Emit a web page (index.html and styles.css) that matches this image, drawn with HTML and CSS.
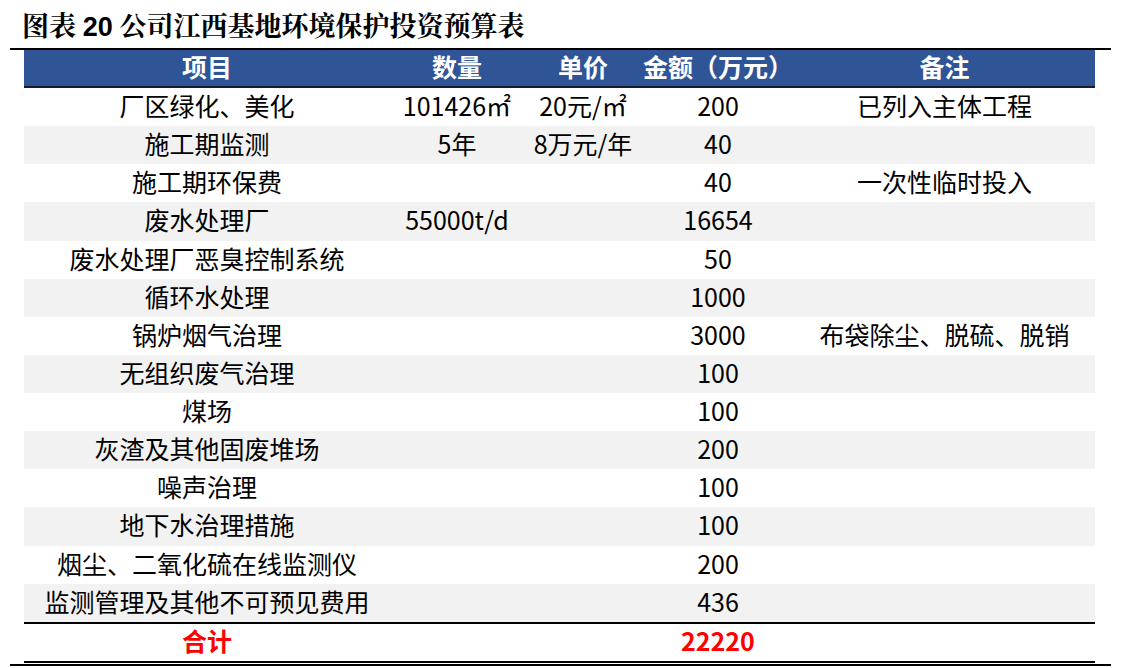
FILE: index.html
```html
<!DOCTYPE html>
<html lang="zh-CN">
<head>
<meta charset="utf-8">
<title>图表 20 公司江西基地环境保护投资预算表</title>
<link rel="stylesheet" href="styles.css">
</head>
<body>
<div class="page">
  <h1 class="title">图表 <span class="num">20</span> 公司江西基地环境保护投资预算表</h1>
  <div class="rule"></div>
  <table class="budget">
    <colgroup>
      <col class="c1"><col class="c2"><col class="c3"><col class="c4"><col class="c5">
    </colgroup>
    <thead>
      <tr><th>项目</th><th>数量</th><th>单价</th><th>金额（万元）</th><th>备注</th></tr>
    </thead>
    <tbody>
      <tr><td>厂区绿化、美化</td><td>101426㎡</td><td>20元/㎡</td><td>200</td><td>已列入主体工程</td></tr>
      <tr><td>施工期监测</td><td>5年</td><td>8万元/年</td><td>40</td><td></td></tr>
      <tr><td>施工期环保费</td><td></td><td></td><td>40</td><td>一次性临时投入</td></tr>
      <tr><td>废水处理厂</td><td>55000t/d</td><td></td><td>16654</td><td></td></tr>
      <tr><td>废水处理厂恶臭控制系统</td><td></td><td></td><td>50</td><td></td></tr>
      <tr><td>循环水处理</td><td></td><td></td><td>1000</td><td></td></tr>
      <tr><td>锅炉烟气治理</td><td></td><td></td><td>3000</td><td>布袋除尘、脱硫、脱销</td></tr>
      <tr><td>无组织废气治理</td><td></td><td></td><td>100</td><td></td></tr>
      <tr><td>煤场</td><td></td><td></td><td>100</td><td></td></tr>
      <tr><td>灰渣及其他固废堆场</td><td></td><td></td><td>200</td><td></td></tr>
      <tr><td>噪声治理</td><td></td><td></td><td>100</td><td></td></tr>
      <tr><td>地下水治理措施</td><td></td><td></td><td>100</td><td></td></tr>
      <tr><td>烟尘、二氧化硫在线监测仪</td><td></td><td></td><td>200</td><td></td></tr>
      <tr><td>监测管理及其他不可预见费用</td><td></td><td></td><td>436</td><td></td></tr>
    </tbody>
    <tfoot>
      <tr><td>合计</td><td></td><td></td><td>22220</td><td></td></tr>
    </tfoot>
  </table>
  <div class="rule rule-bottom"></div>
</div>
</body>
</html>
```

FILE: styles.css
```css
* { box-sizing: border-box; }

html, body {
  margin: 0;
  padding: 0;
  background: #ffffff;
}

.page {
  width: 1123px;
  padding-left: 10px;
}

.title {
  margin: 0;
  height: 48px;
  padding-left: 12px;
  line-height: 50px;
  font-family: "Noto Serif CJK SC", "Noto Sans CJK SC", serif;
  font-size: 27px;
  font-weight: 700;
  color: #000;
  white-space: nowrap;
}

.title .num {
  font-family: "Liberation Sans", Arial, sans-serif;
  font-weight: 700;
}

.rule {
  width: 1101px;
  height: 2px;
  background: #000;
}

.rule-bottom {
  margin-top: 1px;
}

.budget {
  margin-left: 14px;
  width: 1071px;
  table-layout: fixed;
  border-collapse: separate;
  border-spacing: 0;
  font-family: "Noto Sans CJK SC", "Noto Sans", sans-serif;
  font-size: 25px;
  color: #000;
}

.c1 { width: 366px; }
.c2 { width: 134px; }
.c3 { width: 118px; }
.c4 { width: 152px; }
.c5 { width: 301px; }

.budget th,
.budget td {
  padding: 0 0 4px;
  text-align: center;
  vertical-align: middle;
  white-space: nowrap;
  line-height: 1.2;
}

.budget th {
  height: 38px;
  background: #2f5597;
  color: #ffffff;
  font-weight: 700;
  border-bottom: 2px solid #141c2e;
}

.budget tbody td {
  height: 38.14px;
}

.budget tbody tr:nth-child(even) td {
  background: #f2f2f2;
}

.budget tfoot td {
  height: 41px;
  border-top: 2px solid #000;
  border-bottom: 2px solid #000;
  color: #ff0000;
  font-weight: 700;
}
```
